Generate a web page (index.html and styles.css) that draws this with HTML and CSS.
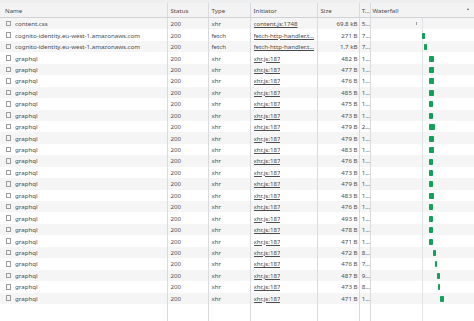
FILE: index.html
```html
<!DOCTYPE html>
<html>
<head>
<meta charset="utf-8">
<link rel="stylesheet" href="styles.css">
</head>
<body>
<div class="panel">
  <div class="topband"></div>
  <div class="row head">
    <div class="cell name">Name</div>
    <div class="cell">Status</div>
    <div class="cell">Type</div>
    <div class="cell">Initiator</div>
    <div class="cell">Size</div>
    <div class="cell time">T…</div>
    <div class="cell wfh">Waterfall<span class="sort"></span></div>
  </div>
  <div class="rows">
    <div class="row odd"><div class="cell name"><span class="cb"></span>content.css</div><div class="cell">200</div><div class="cell">xhr</div><div class="cell"><span class="link">content.js:1748</span></div><div class="cell size">69.8 kB</div><div class="cell time">5…</div><div class="cell wf"><span class="tick" style="left:45px"></span></div></div>
    <div class="row"><div class="cell name"><span class="cb"></span>cognito-identity.eu-west-1.amazonaws.com</div><div class="cell">200</div><div class="cell">fetch</div><div class="cell"><span class="link">fetch-http-handler.t…</span></div><div class="cell size">271 B</div><div class="cell time">7…</div><div class="cell wf"><span class="bar" style="left:51px;width:2.6px"></span></div></div>
    <div class="row odd"><div class="cell name"><span class="cb"></span>cognito-identity.eu-west-1.amazonaws.com</div><div class="cell">200</div><div class="cell">fetch</div><div class="cell"><span class="link">fetch-http-handler.t…</span></div><div class="cell size">1.7 kB</div><div class="cell time">7…</div><div class="cell wf"><span class="bar" style="left:53.3px;width:2.5px"></span></div></div>
    <div class="row"><div class="cell name"><span class="cb"></span>graphql</div><div class="cell">200</div><div class="cell">xhr</div><div class="cell"><span class="link">xhr.js:187</span></div><div class="cell size">482 B</div><div class="cell time">1…</div><div class="cell wf"><span class="bar" style="left:57.5px;width:5.5px"></span></div></div>
    <div class="row odd"><div class="cell name"><span class="cb"></span>graphql</div><div class="cell">200</div><div class="cell">xhr</div><div class="cell"><span class="link">xhr.js:187</span></div><div class="cell size">477 B</div><div class="cell time">1…</div><div class="cell wf"><span class="bar" style="left:57.5px;width:5px"></span></div></div>
    <div class="row"><div class="cell name"><span class="cb"></span>graphql</div><div class="cell">200</div><div class="cell">xhr</div><div class="cell"><span class="link">xhr.js:187</span></div><div class="cell size">476 B</div><div class="cell time">1…</div><div class="cell wf"><span class="bar" style="left:58px;width:4.5px"></span></div></div>
    <div class="row odd"><div class="cell name"><span class="cb"></span>graphql</div><div class="cell">200</div><div class="cell">xhr</div><div class="cell"><span class="link">xhr.js:187</span></div><div class="cell size">485 B</div><div class="cell time">1…</div><div class="cell wf"><span class="bar" style="left:58px;width:4.5px"></span></div></div>
    <div class="row"><div class="cell name"><span class="cb"></span>graphql</div><div class="cell">200</div><div class="cell">xhr</div><div class="cell"><span class="link">xhr.js:187</span></div><div class="cell size">475 B</div><div class="cell time">1…</div><div class="cell wf"><span class="bar" style="left:58px;width:3.5px"></span></div></div>
    <div class="row odd"><div class="cell name"><span class="cb"></span>graphql</div><div class="cell">200</div><div class="cell">xhr</div><div class="cell"><span class="link">xhr.js:187</span></div><div class="cell size">473 B</div><div class="cell time">1…</div><div class="cell wf"><span class="bar" style="left:58px;width:4px"></span></div></div>
    <div class="row"><div class="cell name"><span class="cb"></span>graphql</div><div class="cell">200</div><div class="cell">xhr</div><div class="cell"><span class="link">xhr.js:187</span></div><div class="cell size">479 B</div><div class="cell time">2…</div><div class="cell wf"><span class="bar" style="left:58px;width:5.5px"></span></div></div>
    <div class="row odd"><div class="cell name"><span class="cb"></span>graphql</div><div class="cell">200</div><div class="cell">xhr</div><div class="cell"><span class="link">xhr.js:187</span></div><div class="cell size">479 B</div><div class="cell time">1…</div><div class="cell wf"><span class="bar" style="left:58px;width:4.5px"></span></div></div>
    <div class="row"><div class="cell name"><span class="cb"></span>graphql</div><div class="cell">200</div><div class="cell">xhr</div><div class="cell"><span class="link">xhr.js:187</span></div><div class="cell size">483 B</div><div class="cell time">1…</div><div class="cell wf"><span class="bar" style="left:58px;width:4.5px"></span></div></div>
    <div class="row odd"><div class="cell name"><span class="cb"></span>graphql</div><div class="cell">200</div><div class="cell">xhr</div><div class="cell"><span class="link">xhr.js:187</span></div><div class="cell size">476 B</div><div class="cell time">1…</div><div class="cell wf"><span class="bar" style="left:58px;width:4px"></span></div></div>
    <div class="row"><div class="cell name"><span class="cb"></span>graphql</div><div class="cell">200</div><div class="cell">xhr</div><div class="cell"><span class="link">xhr.js:187</span></div><div class="cell size">473 B</div><div class="cell time">1…</div><div class="cell wf"><span class="bar" style="left:58px;width:4px"></span></div></div>
    <div class="row odd"><div class="cell name"><span class="cb"></span>graphql</div><div class="cell">200</div><div class="cell">xhr</div><div class="cell"><span class="link">xhr.js:187</span></div><div class="cell size">479 B</div><div class="cell time">1…</div><div class="cell wf"><span class="bar" style="left:58px;width:4px"></span></div></div>
    <div class="row"><div class="cell name"><span class="cb"></span>graphql</div><div class="cell">200</div><div class="cell">xhr</div><div class="cell"><span class="link">xhr.js:187</span></div><div class="cell size">483 B</div><div class="cell time">1…</div><div class="cell wf"><span class="bar" style="left:58px;width:4.5px"></span></div></div>
    <div class="row odd"><div class="cell name"><span class="cb"></span>graphql</div><div class="cell">200</div><div class="cell">xhr</div><div class="cell"><span class="link">xhr.js:187</span></div><div class="cell size">476 B</div><div class="cell time">1…</div><div class="cell wf"><span class="bar" style="left:58px;width:4px"></span></div></div>
    <div class="row"><div class="cell name"><span class="cb"></span>graphql</div><div class="cell">200</div><div class="cell">xhr</div><div class="cell"><span class="link">xhr.js:187</span></div><div class="cell size">493 B</div><div class="cell time">1…</div><div class="cell wf"><span class="bar" style="left:58px;width:4px"></span></div></div>
    <div class="row odd"><div class="cell name"><span class="cb"></span>graphql</div><div class="cell">200</div><div class="cell">xhr</div><div class="cell"><span class="link">xhr.js:187</span></div><div class="cell size">478 B</div><div class="cell time">1…</div><div class="cell wf"><span class="bar" style="left:58px;width:3.5px"></span></div></div>
    <div class="row"><div class="cell name"><span class="cb"></span>graphql</div><div class="cell">200</div><div class="cell">xhr</div><div class="cell"><span class="link">xhr.js:187</span></div><div class="cell size">471 B</div><div class="cell time">1…</div><div class="cell wf"><span class="bar" style="left:58px;width:4px"></span></div></div>
    <div class="row odd"><div class="cell name"><span class="cb"></span>graphql</div><div class="cell">200</div><div class="cell">xhr</div><div class="cell"><span class="link">xhr.js:187</span></div><div class="cell size">472 B</div><div class="cell time">8…</div><div class="cell wf"><span class="bar" style="left:62px;width:2.7px"></span></div></div>
    <div class="row"><div class="cell name"><span class="cb"></span>graphql</div><div class="cell">200</div><div class="cell">xhr</div><div class="cell"><span class="link">xhr.js:187</span></div><div class="cell size">476 B</div><div class="cell time">7…</div><div class="cell wf"><span class="bar" style="left:64px;width:2.3px"></span></div></div>
    <div class="row odd"><div class="cell name"><span class="cb"></span>graphql</div><div class="cell">200</div><div class="cell">xhr</div><div class="cell"><span class="link">xhr.js:187</span></div><div class="cell size">487 B</div><div class="cell time">9…</div><div class="cell wf"><span class="bar" style="left:66px;width:3px"></span></div></div>
    <div class="row"><div class="cell name"><span class="cb"></span>graphql</div><div class="cell">200</div><div class="cell">xhr</div><div class="cell"><span class="link">xhr.js:187</span></div><div class="cell size">473 B</div><div class="cell time">8…</div><div class="cell wf"><span class="bar" style="left:66.5px;width:2.5px"></span></div></div>
    <div class="row odd"><div class="cell name"><span class="cb"></span>graphql</div><div class="cell">200</div><div class="cell">xhr</div><div class="cell"><span class="link">xhr.js:187</span></div><div class="cell size">471 B</div><div class="cell time">1…</div><div class="cell wf"><span class="bar" style="left:69px;width:4px"></span></div></div>
    <div class="row fill"><div class="cell name"></div><div class="cell"></div><div class="cell"></div><div class="cell"></div><div class="cell"></div><div class="cell"></div><div class="cell wf"></div></div>
  </div>
</div>
</body>
</html>
```
FILE: styles.css
```css
html, body {
  margin: 0;
  padding: 0;
}
body {
  width: 474px;
  height: 321px;
  overflow: hidden;
  background: #ffffff;
  font-family: "Noto Sans", "Open Sans", sans-serif;
  font-size: 6.15px;
  color: #4d4d4d;
}
.panel {
  display: flex;
  flex-direction: column;
  height: 321px;
}
.topband {
  height: 3px;
  background: #eceef0;
  flex: none;
}
.row {
  display: grid;
  grid-template-columns: 167px 41px 42px 67px 42px 11px 104px;
  height: 11.45px;
  flex: none;
}
.row.odd {
  background: #f5f5f5;
}
.head {
  background: #f3f3f3;
  border-bottom: 1px solid #cfd1d4;
  box-sizing: border-box;
  height: 15px;
}
.rows {
  flex: 1;
  display: flex;
  flex-direction: column;
}
.row.fill {
  flex: 1;
  height: auto;
}
.cell {
  border-left: 1px solid #d9dbde;
  padding: 0 2px 0 2.5px;
  display: flex;
  align-items: center;
  overflow: hidden;
  white-space: nowrap;
  min-width: 0;
}
.cell.name {
  border-left: none;
  padding-left: 6px;
}
.head .cell.name {
  padding-left: 5px;
}
.cell.size {
  justify-content: flex-end;
  padding-right: 1.5px;
}
.cell.time {
  padding-left: 1.7px;
  padding-right: 0;
}
.cb {
  width: 5px;
  height: 5.5px;
  box-sizing: border-box;
  border: 0.8px solid #9a9a9a;
  border-radius: 0.6px;
  margin-right: 4px;
  flex: none;
}
.link {
  text-decoration: underline;
  overflow: hidden;
  display: block;
}
.wfh {
  padding-left: 1.5px;
  position: relative;
}
.sort {
  position: absolute;
  right: 5px;
  top: 5px;
  width: 0;
  height: 0;
  border-left: 1.8px solid transparent;
  border-right: 1.8px solid transparent;
  border-bottom: 2.5px solid #5f6368;
}
.wf {
  position: relative;
  background-image: linear-gradient(to right, transparent 51px, #e2e3e5 51px, #e2e3e5 52px, transparent 52px);
}
.bar {
  position: absolute;
  top: 3.3px;
  height: 6px;
  background: #13a05b;
  border-radius: 0.8px;
}
.tick {
  position: absolute;
  top: 4px;
  width: 1px;
  height: 3px;
  background: #9aa0a6;
}
```
